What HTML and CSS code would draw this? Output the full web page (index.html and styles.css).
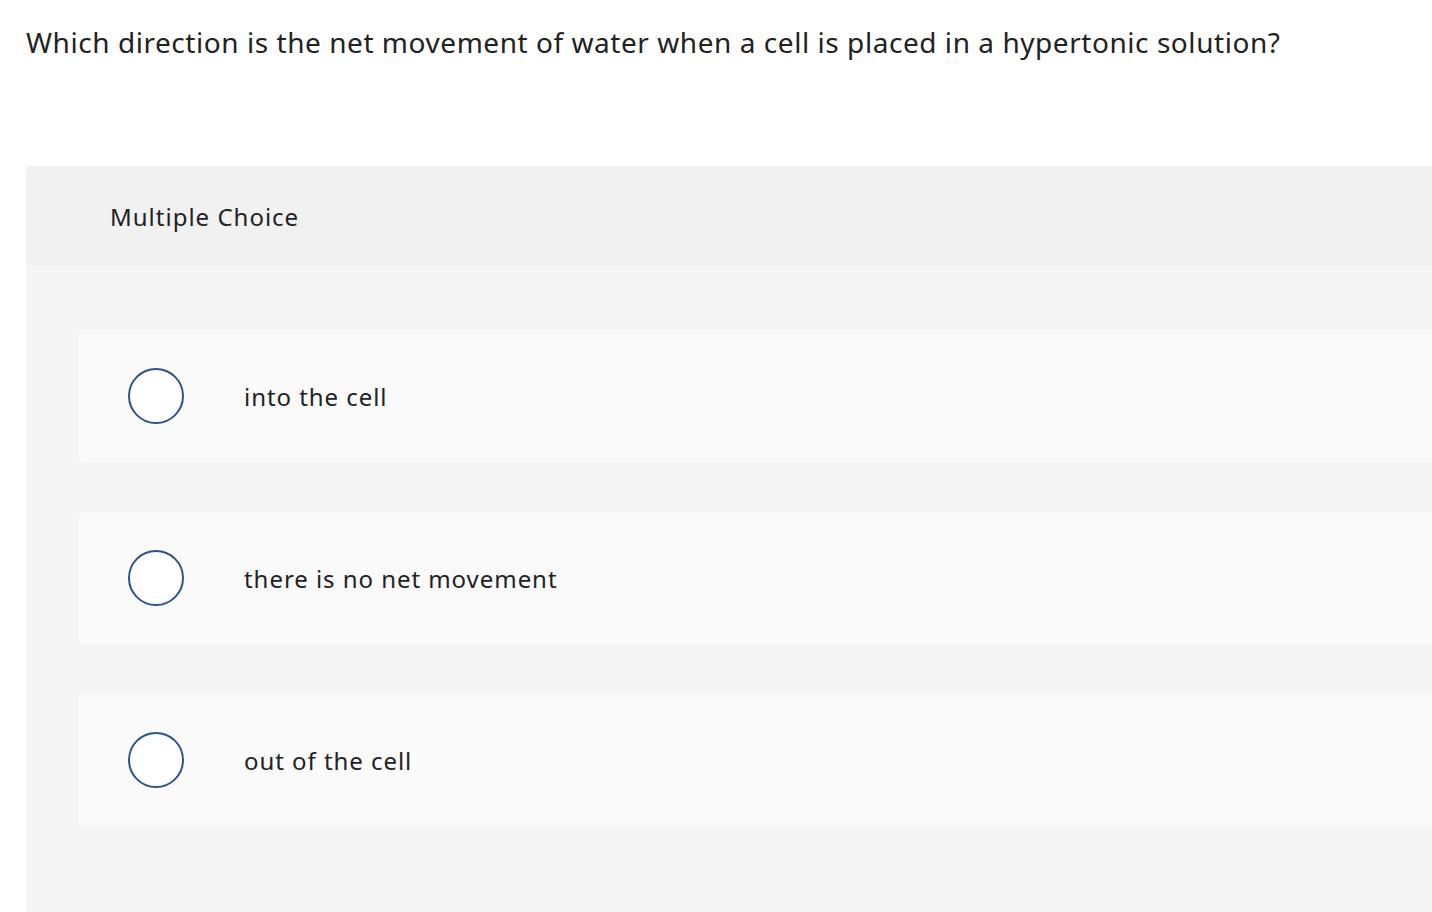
FILE: index.html
```html
<!DOCTYPE html>
<html>
<head>
  <meta charset="UTF-8" />
  <title>question</title>
  <link rel="stylesheet" href="styles.css">
</head>
<body>
  <main class='page'>
    <h1 class='prompt'>Which direction is the net movement of water when a cell is placed in a hypertonic solution?</h1>

    <section class='card'>
      <div class='cardHeader'>
        <p>Multiple Choice</p>
      </div>
      <div class='choices'>
        <label class='choice'>
          <span class='radio'></span>
          <span class='choiceText'>into the cell</span>
        </label>
        <label class='choice'>
          <span class='radio'></span>
          <span class='choiceText'>there is no net movement</span>
        </label>
        <label class='choice'>
          <span class='radio'></span>
          <span class='choiceText'>out of the cell</span>
        </label>
      </div>
    </section>
  </main>
</body>
</html>
```

FILE: styles.css
```css
html, body {
  margin: 0;
  overflow: hidden;
}

body {
  font-family: "Noto Sans", sans-serif;
  color: #222;
  background-color: #fff;
}

.page {
  padding-left: 26px;
}

.prompt {
  font-size: 28px;
  font-weight: normal;
  letter-spacing: 0.55px;
  margin: 0;
  padding-top: 23px;
  line-height: 38px;
  height: 143px;
  white-space: nowrap;
}

.card {
  border-radius: 5px 0 0 0;
  background-color: #f5f5f5;
  height: 746px;
}

.cardHeader {
  background-color: #f1f1f1;
  border-radius: 5px 0 0 0;
  height: 100px;
  display: flex;
  align-items: center;
  padding-left: 84px;
}

.cardHeader p {
  margin: 0;
  font-size: 24px;
  letter-spacing: 1px;
}

.choices {
  display: flex;
  flex-direction: column;
  gap: 50px;
  padding: 64px 0 0 52px;
}

.choice {
  display: flex;
  align-items: center;
  height: 132px;
  background-color: #fafafa;
  border-radius: 5px 0 0 5px;
  padding-left: 50px;
}

.radio {
  width: 52px;
  height: 52px;
  border: 2px solid #2b5589;
  border-radius: 50%;
  background-color: #fff;
  flex-shrink: 0;
}

.choiceText {
  margin-left: 60px;
  font-size: 24px;
  letter-spacing: 0.95px;
}
```
